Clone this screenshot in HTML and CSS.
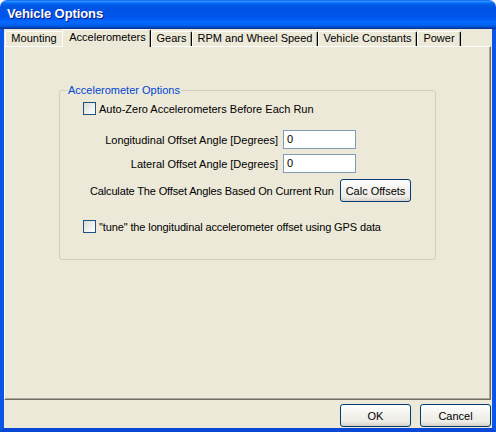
FILE: index.html
```html
<!DOCTYPE html>
<html>
<head>
<meta charset="utf-8">
<title>Vehicle Options</title>
<link rel="stylesheet" href="styles.css">
</head>
<body>
<div class="window">
  <div class="titlebar"><span class="title">Vehicle Options</span></div>
  <div class="frame">
    <div class="tabs">
      <div class="tab w-mount">Mounting</div>
      <div class="tab active w-accel">Accelerometers</div>
      <div class="tab w-gears">Gears</div>
      <div class="tab w-rpm">RPM and Wheel Speed</div>
      <div class="tab w-vc">Vehicle Constants</div>
      <div class="tab w-power">Power</div>
    </div>
    <div class="panel">
      <fieldset class="group">
        <legend>Accelerometer Options</legend>
        <div class="check-row first"><span class="check"></span><span>Auto-Zero Accelerometers Before Each Run</span></div>
        <div class="field-row r1"><span class="lbl">Longitudinal Offset Angle [Degrees]</span><div class="input">0</div></div>
        <div class="field-row r2"><span class="lbl">Lateral Offset Angle [Degrees]</span><div class="input">0</div></div>
        <div class="calc-row"><span class="calc-text">Calculate The Offset Angles Based On Current Run</span><button class="btn">Calc Offsets</button></div>
        <div class="check-row last"><span class="check"></span><span class="tight">"tune" the longitudinal accelerometer offset using GPS data</span></div>
      </fieldset>
    </div>
    <div class="footer">
      <button class="btn">OK</button>
      <button class="btn">Cancel</button>
    </div>
  </div>
</div>
</body>
</html>
```

FILE: styles.css
```css
* { box-sizing: border-box; }
html, body { margin: 0; padding: 0; background: #ffffff; }
body {
  font-family: "Liberation Sans", Arial, sans-serif;
  font-size: 11px;
  color: #000;
}
.window {
  width: 496px;
  height: 432px;
  display: flex;
  flex-direction: column;
}
.titlebar {
  height: 29px;
  flex: none;
  border-radius: 7px 7px 0 0;
  background: linear-gradient(to bottom, #0058ee 0%, #3593ff 4%, #288eff 6%, #127dff 8%, #036ffc 10%, #0262ee 14%, #0057e5 20%, #0054e3 24%, #0055eb 56%, #005bf5 66%, #026afe 76%, #0062ef 86%, #0052d6 92%, #0040ab 96%, #003092 100%);
  padding: 6px 0 0 7px;
}
.title {
  color: #fff;
  font-weight: bold;
  font-size: 13px;
  line-height: 16px;
  letter-spacing: -0.1px;
  text-shadow: 1px 1px #0a1883;
}
.frame {
  flex: 1;
  background: #ece9d8;
  border-left: 4px solid #0a55e6;
  border-right: 4px solid #0a55e6;
  border-bottom: 4px solid #0846d6;
  display: flex;
  flex-direction: column;
}
.tabs {
  height: 17px;
  flex: none;
  display: flex;
  align-items: flex-end;
  padding-left: 1px;
}
.tab {
  height: 15px;
  line-height: 13px;
  text-align: center;
  border-top: 1px solid #fff;
  border-left: 1px solid #fff;
  border-right: 1px solid #000;
  border-radius: 2px 2px 0 0;
  box-shadow: inset -1px 0 #aca899;
  white-space: nowrap;
  background: #ece9d8;
}
.tab.active {
  position: relative;
  z-index: 1;
  height: 18px;
  margin-bottom: -1px;
  line-height: 15px;
  padding-left: 2px;
}
.w-mount { width: 57px; border-right: none; box-shadow: none; }
.w-accel { width: 89px; }
.w-gears { width: 41px; }
.w-rpm { width: 126px; }
.w-vc { width: 99px; }
.w-power { width: 44px; }

.panel {
  width: 487px;
  height: 354px;
  flex: none;
  border-top: 1px solid #fff;
  border-left: 1px solid #fff;
  border-right: 1px solid #716f64;
  border-bottom: 1px solid #716f64;
  box-shadow: inset -1px -1px #aca899;
  padding: 37px 0 0 54px;
}
.group {
  width: 377px;
  margin: 0;
  padding: 0 0 26px 0;
  border: 1px solid #d0d0bf;
  border-radius: 3px;
}
.group legend {
  color: #0046d5;
  margin-left: 7px;
  padding: 0 1px;
  line-height: 13px;
}
.check-row {
  display: flex;
  align-items: center;
  height: 13px;
  margin-left: 23px;
  white-space: nowrap;
}
.check-row.first { margin-top: 5px; }
.check-row.last { margin-top: 18px; }
.check {
  width: 13px;
  height: 13px;
  border: 1px solid #1c5180;
  background: linear-gradient(135deg, #dcdcd7 0%, #f4f4f0 70%, #fff 100%);
  margin-right: 3px;
  flex: none;
}
.tight { letter-spacing: -0.12px; }
.field-row {
  display: grid;
  grid-template-columns: 218px 73px;
  column-gap: 5px;
  align-items: center;
  height: 19px;
}
.field-row.r1 { margin-top: 15px; }
.field-row.r2 { margin-top: 5px; }
.lbl { text-align: right; white-space: nowrap; }
.input {
  height: 19px;
  border: 1px solid #7f9db9;
  background: #fff;
  padding-left: 3px;
  line-height: 17px;
}
.calc-row {
  display: grid;
  grid-template-columns: 250px 71px;
  align-items: center;
  margin: 6px 0 0 30px;
  height: 23px;
  white-space: nowrap;
}
.calc-text { letter-spacing: -0.15px; }
.btn {
  font-family: "Liberation Sans", Arial, sans-serif;
  font-size: 11px;
  color: #000;
  width: 71px;
  height: 23px;
  padding: 0;
  border: 1px solid #003c74;
  border-radius: 3px;
  background: linear-gradient(to bottom, #ffffff 0%, #f4f3ee 40%, #ecebe6 80%, #d6d0c5 100%);
}
.footer {
  flex: 1;
  display: flex;
  justify-content: flex-end;
  align-items: flex-start;
  gap: 9px;
  padding: 4px 1px 0 0;
}
```
